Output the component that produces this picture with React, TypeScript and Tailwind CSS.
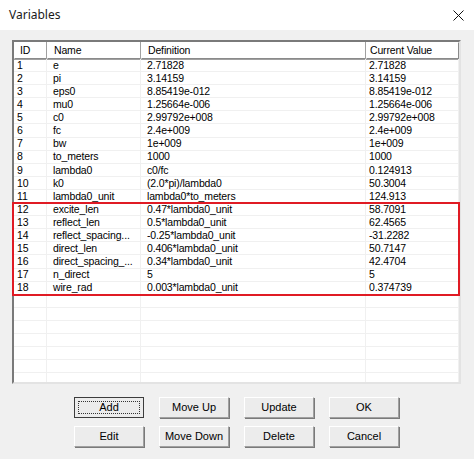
import React from "react";

type Row = { id: number; name: string; def: string; value: string };

const rows: Row[] = [
  { id: 1, name: "e", def: "2.71828", value: "2.71828" },
  { id: 2, name: "pi", def: "3.14159", value: "3.14159" },
  { id: 3, name: "eps0", def: "8.85419e-012", value: "8.85419e-012" },
  { id: 4, name: "mu0", def: "1.25664e-006", value: "1.25664e-006" },
  { id: 5, name: "c0", def: "2.99792e+008", value: "2.99792e+008" },
  { id: 6, name: "fc", def: "2.4e+009", value: "2.4e+009" },
  { id: 7, name: "bw", def: "1e+009", value: "1e+009" },
  { id: 8, name: "to_meters", def: "1000", value: "1000" },
  { id: 9, name: "lambda0", def: "c0/fc", value: "0.124913" },
  { id: 10, name: "k0", def: "(2.0*pi)/lambda0", value: "50.3004" },
  { id: 11, name: "lambda0_unit", def: "lambda0*to_meters", value: "124.913" },
  { id: 12, name: "excite_len", def: "0.47*lambda0_unit", value: "58.7091" },
  { id: 13, name: "reflect_len", def: "0.5*lambda0_unit", value: "62.4565" },
  { id: 14, name: "reflect_spacing...", def: "-0.25*lambda0_unit", value: "-31.2282" },
  { id: 15, name: "direct_len", def: "0.406*lambda0_unit", value: "50.7147" },
  { id: 16, name: "direct_spacing_...", def: "0.34*lambda0_unit", value: "42.4704" },
  { id: 17, name: "n_direct", def: "5", value: "5" },
  { id: 18, name: "wire_rad", def: "0.003*lambda0_unit", value: "0.374739" },
];

const emptyRows = Array.from({ length: 8 }, (_, i) => i);

function HeaderCell({ w, label, pad = "pl-[6px]" }: { w: string; label: string; pad?: string }) {
  return (
    <div
      className={`${w} ${pad} h-full flex items-center border border-t-white border-l-white border-r-[#8a8a8a] border-b-[#8a8a8a] outline outline-1 outline-[#a0a0a0]`}
    >
      {label}
    </div>
  );
}

function Cell({ w, children, pad = "pl-[6px]" }: { w: string; children?: React.ReactNode; pad?: string }) {
  return (
    <div className={`${w} ${pad} h-full flex items-center border-r border-[#f0f0f0] whitespace-nowrap overflow-hidden`}>
      {children}
    </div>
  );
}

function Btn({ label, primary }: { label: string; primary?: boolean }) {
  return (
    <button
      className={`relative w-[70px] h-[21px] bg-[#ececec] text-[11px] text-black border ${
        primary
          ? "border-[#3c3c3c]"
          : "border-t-white border-l-white border-r-[#a0a0a0] border-b-[#a0a0a0] shadow-[1px_1px_0_#7a7a7a]"
      }`}
    >
      {primary && <span className="absolute inset-[3px] border border-dotted border-[#333]" />}
      <span className="relative">{label}</span>
    </button>
  );
}

export default function App() {
  return (
    <div
      className="w-[474px] h-[459px] bg-[#f0f0f0] overflow-hidden flex flex-col text-black"
      style={{ fontFamily: '"Liberation Sans", Arial, sans-serif' }}
    >
      {/* Title bar */}
      <div className="h-[30px] bg-white flex items-center justify-between pl-[9px] pr-[9px] shrink-0">
        <span className="text-[12px] text-[#1a1a1a]" style={{ fontFamily: '"Noto Sans", "Liberation Sans", sans-serif' }}>
          Variables
        </span>
        <svg width="11" height="11" viewBox="0 0 11 11" className="mr-[1px]">
          <path d="M0.5 0.5 L10.5 10.5 M10.5 0.5 L0.5 10.5" stroke="#111" strokeWidth="1" />
        </svg>
      </div>

      {/* List */}
      <div className="relative pt-[10px] pl-[12px]">
        <div className="w-[449px] h-[344px] bg-white border-2 border-t-[#7a7a7a] border-l-[#7a7a7a] border-r-[#e3e3e3] border-b-[#e3e3e3] overflow-hidden text-[10.5px] tracking-[-0.15px]">
          <div className="flex h-[17px] bg-white">
            <HeaderCell w="w-[33px]" label="ID" pad="pl-[5px]" />
            <HeaderCell w="w-[94px]" label="Name" />
            <HeaderCell w="w-[225px]" label="Definition" />
            <HeaderCell w="w-[93px]" label="Current Value" pad="pl-[3px]" />
          </div>
          {rows.map((r) => (
            <div key={r.id} className="flex h-[13.1px] border-b border-[#f0f0f0] leading-none">
              <Cell w="w-[33px]" pad="pl-[3px]">{r.id}</Cell>
              <Cell w="w-[94px]">{r.name}</Cell>
              <Cell w="w-[225px]">{r.def}</Cell>
              <Cell w="w-[93px]" pad="pl-[3px]">{r.value}</Cell>
            </div>
          ))}
          {emptyRows.map((i) => (
            <div key={i} className="flex h-[13.1px] border-b border-[#f0f0f0]">
              <Cell w="w-[33px]" />
              <Cell w="w-[94px]" />
              <Cell w="w-[225px]" />
              <Cell w="w-[93px]" />
            </div>
          ))}
        </div>
        {/* highlight annotation */}
        <div className="absolute left-[12px] top-[172px] w-[448px] h-[94px] border-2 border-[#e01b24] pointer-events-none" />
      </div>

      {/* Buttons */}
      <div className="pl-[74px] pt-[13px] grid grid-cols-[repeat(4,70px)] gap-x-[15px] gap-y-[8px]">
        <Btn label="Add" primary />
        <Btn label="Move Up" />
        <Btn label="Update" />
        <Btn label="OK" />
        <Btn label="Edit" />
        <Btn label="Move Down" />
        <Btn label="Delete" />
        <Btn label="Cancel" />
      </div>
    </div>
  );
}
